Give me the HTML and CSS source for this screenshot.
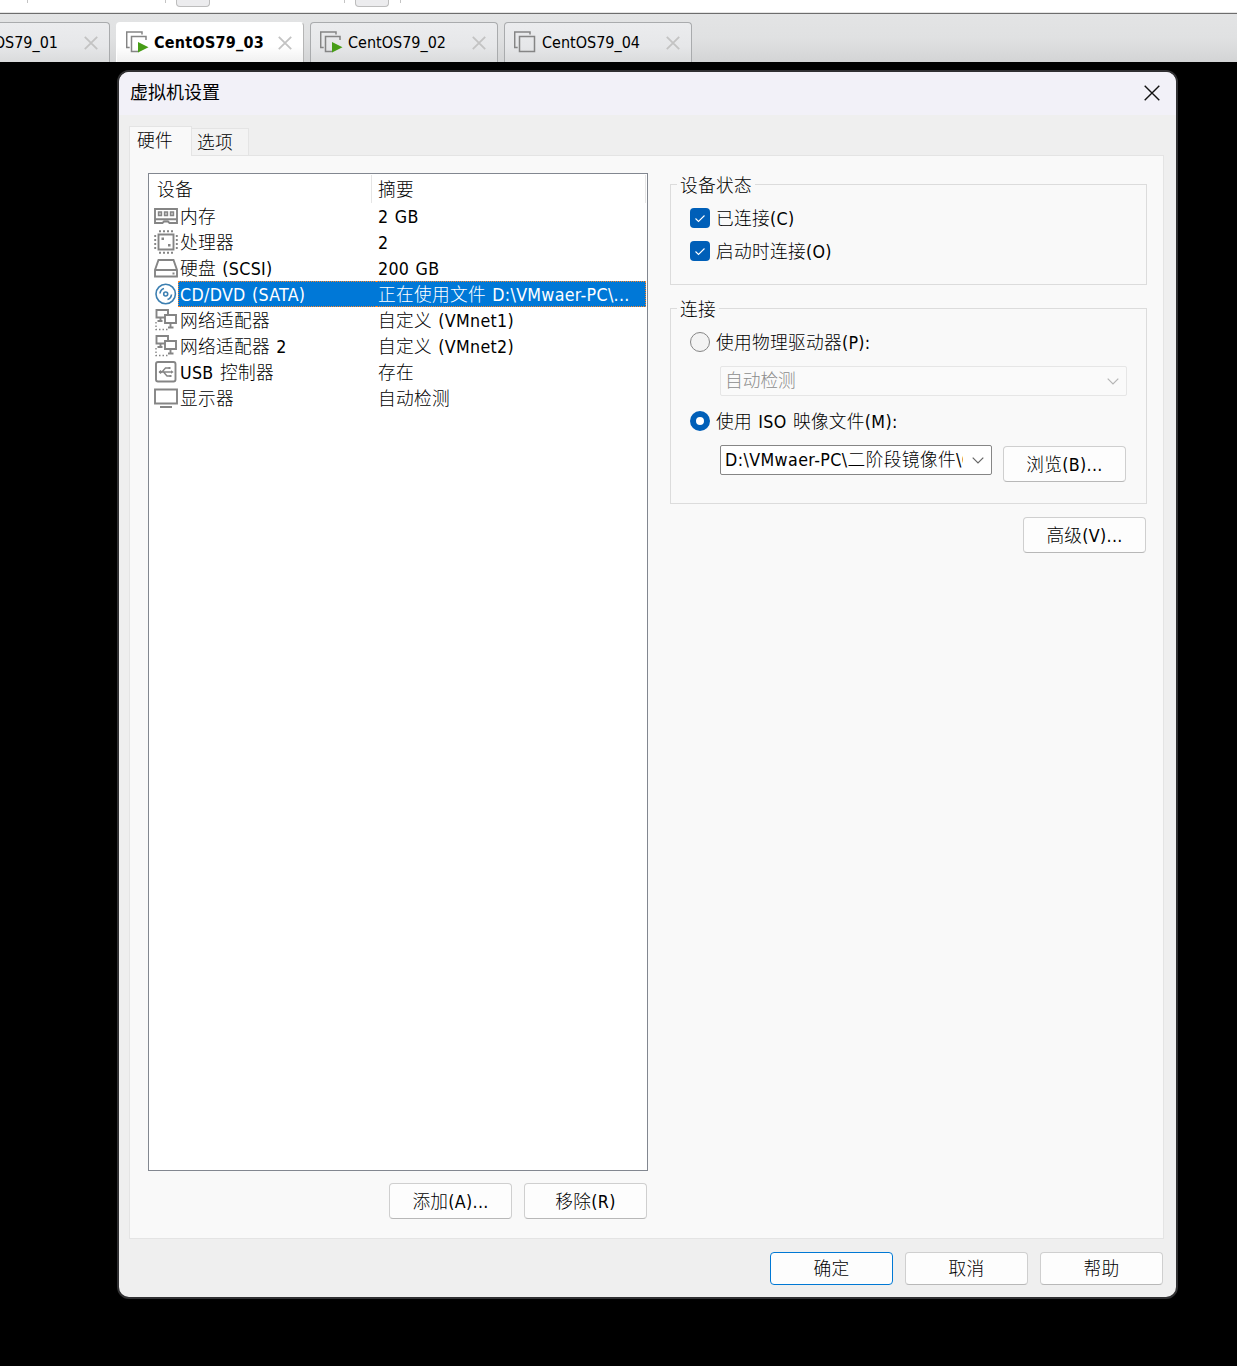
FILE: index.html
```
<!DOCTYPE html>
<html lang="zh-CN">
<head>
	<meta charset="utf-8">
	<title>虚拟机设置</title>
	<link rel="stylesheet" href="styles.css">
</head>
<body>
	<div class="toolbar">
		<i class="sep s1"></i>
		<i class="sep s2"></i>
		<i class="tool t1"></i>
		<i class="sep s3"></i>
		<i class="tool t2"></i>
		<i class="sep s4"></i>
	</div>

	<div class="vm-tabs">
		<div class="vm-tab first">
			<span class="vm-name">CentOS79_01</span>
			<svg class="close" width="14" height="14" viewBox="0 0 14 14"><path d="M.8.8l12.4 12.4M13.2.8L.8 13.2"/></svg>
		</div>
		<div class="vm-tab active">
			<svg class="vm-icon" width="23" height="23" viewBox="0 0 23 23"><path class="ln" d="M16 3.500V1H.700v15.500h3M20 9V5.500H5.500v15h7"/><path class="play" d="M12 11l10.500 5.200L12 21.500z"/></svg>
			<span class="vm-name">CentOS79_03</span>
			<svg class="close" width="14" height="14" viewBox="0 0 14 14"><path d="M.8.8l12.4 12.4M13.2.8L.8 13.2"/></svg>
		</div>
		<div class="vm-tab">
			<svg class="vm-icon" width="23" height="23" viewBox="0 0 23 23"><path class="ln" d="M16 3.500V1H.700v15.500h3M20 9V5.500H5.500v15h7"/><path class="play" d="M12 11l10.500 5.200L12 21.500z"/></svg>
			<span class="vm-name">CentOS79_02</span>
			<svg class="close" width="14" height="14" viewBox="0 0 14 14"><path d="M.8.8l12.4 12.4M13.2.8L.8 13.2"/></svg>
		</div>
		<div class="vm-tab">
			<svg class="vm-icon" width="23" height="23" viewBox="0 0 23 23"><path class="ln" d="M16 3.500V1H.700v15.500h3M5.500 5.500h15v15h-15z"/></svg>
			<span class="vm-name">CentOS79_04</span>
			<svg class="close" width="14" height="14" viewBox="0 0 14 14"><path d="M.8.8l12.4 12.4M13.2.8L.8 13.2"/></svg>
		</div>
	</div>

	<div class="dialog">
		<div class="title-bar">
			<span>虚拟机设置</span>
			<svg width="16" height="16" viewBox="0 0 16 16"><path d="M.7.7l14.600 14.600M15.300.7L.7 15.300"/></svg>
		</div>

		<div class="tabs">
			<div class="tab current">硬件</div>
			<div class="tab">选项</div>
		</div>

		<div class="panel">
			<div class="left">
				<div class="device-list">
					<div class="list-head">
						<span class="col-name">设备</span>
						<span class="col-info">摘要</span>
					</div>
					<div class="device">
						<svg class="icon" width="24" height="24" viewBox="0 0 24 24"><path d="M1 5h22v14h-7.500L14 17.500h-4L8.500 19H1zM1 15.200h22"/><path class="tint" d="M4.500 8h3v3.500h-3zM10.500 8h3v3.500h-3zM16.500 8h3v3.500h-3z"/></svg>
						<span class="name">内存</span><span class="info">2 GB</span>
					</div>
					<div class="device">
						<svg class="icon" width="24" height="24" viewBox="0 0 24 24"><path d="M4.500 4.500h15v15h-15z"/><path stroke-dasharray="2 2" d="M5 1.200h14M5 22.800h14M1.200 5v14M22.800 5v14"/><path class="fill" d="M7.500 7.500H10V10H7.500zM14 14h2.500v2.500H14z"/></svg>
						<span class="name">处理器</span><span class="info">2</span>
					</div>
					<div class="device">
						<svg class="icon" width="24" height="24" viewBox="0 0 24 24"><path d="M4.500 4h15L23 14v6.500H1V14zM1 14h22M18.500 17.500h2"/></svg>
						<span class="name">硬盘 (SCSI)</span><span class="info">200 GB</span>
					</div>
					<div class="device selected">
						<svg class="icon disc" width="24" height="24" viewBox="0 0 24 24"><circle cx="11.700" cy="12" r="9.700"/><circle cx="11.700" cy="12" r="2"/><path d="M6 11.500Q6.500 7.500 10 6.500M17.500 12.500Q17 16.500 13.500 17.500"/></svg>
						<span class="name">CD/DVD (SATA)</span><span class="info">正在使用文件 D:\VMwaer-PC\...</span>
					</div>
					<div class="device">
						<svg class="icon" width="24" height="24" viewBox="0 0 24 24"><path d="M11 9.500H2.500V2h11.500v4M6.500 9.500v3.500M3.500 13h5M11 7h11v8H11zM16.500 15v4M14 19.500h5.500"/><path class="dots" stroke-dasharray="1.500 2" d="M2 14v7.500h13"/></svg>
						<span class="name">网络适配器</span><span class="info">自定义 (VMnet1)</span>
					</div>
					<div class="device">
						<svg class="icon" width="24" height="24" viewBox="0 0 24 24"><path d="M11 9.500H2.500V2h11.500v4M6.500 9.500v3.500M3.500 13h5M11 7h11v8H11zM16.500 15v4M14 19.500h5.500"/><path class="dots" stroke-dasharray="1.500 2" d="M2 14v7.500h13"/></svg>
						<span class="name">网络适配器 2</span><span class="info">自定义 (VMnet2)</span>
					</div>
					<div class="device">
						<svg class="icon" width="24" height="24" viewBox="0 0 24 24"><rect x="2" y="2" width="19.500" height="19.500" rx="2"/><path class="thin" d="M5 12h13M8 12l3.500-4H15M9.500 12l3.500 4h3"/><path class="fill" d="M4.500 12L6.500 10l2 2-2 2zM14.500 7h2v2h-2zM15.500 15h2v2h-2zM17 10.200l2.700 1.800-2.700 1.800z"/></svg>
						<span class="name">USB 控制器</span><span class="info">存在</span>
					</div>
					<div class="device">
						<svg class="icon" width="24" height="24" viewBox="0 0 24 24"><path d="M1 3.500h22v14H1zM6 21h12"/></svg>
						<span class="name">显示器</span><span class="info">自动检测</span>
					</div>
				</div>
				<div class="list-buttons">
					<div class="btn">添加(A)...</div>
					<div class="btn">移除(R)</div>
				</div>
			</div>

			<div class="right">
				<div class="group status">
					<div class="legend"><span>设备状态</span></div>
					<div class="option">
						<svg class="check" width="20" height="20" viewBox="0 0 20 20"><path d="M5.500 10.500l3 3 6-6"/></svg>
						<span>已连接(C)</span>
					</div>
					<div class="option">
						<svg class="check" width="20" height="20" viewBox="0 0 20 20"><path d="M5.500 10.500l3 3 6-6"/></svg>
						<span>启动时连接(O)</span>
					</div>
				</div>

				<div class="group connection">
					<div class="legend"><span>连接</span></div>
					<div class="option">
						<i class="radio"></i>
						<span>使用物理驱动器(P):</span>
					</div>
					<div class="select disabled">
						<span class="value">自动检测</span>
						<svg width="12" height="7" viewBox="0 0 12 7"><path d="M.7.7L6 6 11.300.7"/></svg>
					</div>
					<div class="option iso">
						<i class="radio on"></i>
						<span>使用 ISO 映像文件(M):</span>
					</div>
					<div class="file-row">
						<div class="select">
							<span class="value">D:\VMwaer-PC\二阶段镜像件\C</span>
							<svg width="12" height="7" viewBox="0 0 12 7"><path d="M.7.7L6 6 11.300.7"/></svg>
						</div>
						<div class="btn">浏览(B)...</div>
					</div>
				</div>

				<div class="btn advanced">高级(V)...</div>
			</div>
		</div>

		<div class="footer">
			<div class="btn default">确定</div>
			<div class="btn">取消</div>
			<div class="btn">帮助</div>
		</div>
	</div>
</body>
</html>
```

FILE: styles.css
```
* {
	box-sizing: border-box;
}
body {
	margin: 0;
	height: 1366px;
	overflow: hidden;
	background: #000;
	color: #000;
	font-family: "DejaVu Sans Condensed", "Noto Sans CJK SC", sans-serif;
	font-size: 17.700px;
	font-weight: 300;
	letter-spacing: .3px;
	word-spacing: 1px;
	line-height: 26px;
	white-space: nowrap;
}
svg {
	display: block;
	flex: none;
	fill: none;
}

/* strip above the dialog */
.toolbar {
	display: flex;
	height: 14px;
	background: #fff;
	border-bottom: 1px solid #6d6d6d;
	box-shadow: inset 0 -1px #e4e4e4;
}
.sep {
	width: 1px;
	height: 3px;
	background: #c4c4c4;
}
.tool {
	width: 34px;
	height: 7px;
	background: #ececee;
	border: 1px solid #bdbdbd;
	border-top: 0;
	border-radius: 0 0 4px 4px;
}
.s1 {
	margin-left: 27px;
}
.s2 {
	margin-left: 137px;
}
.t1 {
	margin-left: 10px;
}
.s3 {
	margin-left: 134px;
}
.t2 {
	margin-left: 10px;
}
.s4 {
	margin-left: 11px;
}
.vm-tabs {
	display: flex;
	gap: 6px;
	height: 48px;
	padding-top: 8px;
	background: linear-gradient(#e3e4e5, #e0e1e2 50%, #d3d4d5);
}
.vm-tab {
	display: flex;
	align-items: center;
	flex: none;
	width: 188px;
	padding: 0 11px 0 9px;
	border: 1px solid #a9abad;
	border-bottom: 0;
	border-radius: 4px 4px 0 0;
	background: linear-gradient(#ebecee, #e6e7e9 60%, #dadbdc);
	font-size: 16px;
	font-weight: normal;
	letter-spacing: 0;
}
.vm-tab.first {
	margin-left: -78px;
	padding-left: 37px;
}
.vm-tab.active {
	background: linear-gradient(#fff 60%, #f0f0f0);
	border-color: #fff #b5b5b5 #fff #fff;
	font-weight: bold;
	letter-spacing: .25px;
}
.vm-icon {
	margin-right: 5px;
}
.vm-name {
	flex: 1;
}
.ln {
	stroke: #858585;
	stroke-width: 1.500;
}
.play {
	fill: #479d17;
}
.close {
	stroke: #c3c3c3;
	stroke-width: 1.800;
}

/* dialog window */
.dialog {
	width: 1061px;
	height: 1229px;
	margin: 8px 0 0 117px;
	border: 2px solid #303032;
	border-radius: 12px;
	background: #efefef;
	overflow: hidden;
}
.title-bar {
	display: flex;
	justify-content: space-between;
	align-items: center;
	height: 43px;
	padding: 0 16px 2px 11px;
	background: #f2f1f8;
	font-size: 18px;
	letter-spacing: 0;
	font-weight: normal;
}
.title-bar svg {
	stroke: #111;
	stroke-width: 1.400;
}
.tabs {
	display: flex;
	align-items: flex-end;
	position: relative;
	z-index: 1;
	height: 41px;
	padding-left: 10px;
}
.tab {
	width: 57px;
	height: 28px;
	padding-left: 5px;
	border: 1px solid #e4e4e4;
	border-left: 0;
	background: #f3f3f3;
	line-height: 28px;
}
.tab.current {
	width: 63px;
	height: 30px;
	padding-left: 7px;
	border: 1px solid #e4e4e4;
	border-bottom: 0;
	background: #f9f9f9;
}
.panel {
	display: flex;
	gap: 22px;
	width: 1035px;
	height: 1084px;
	margin: -1px 0 0 10px;
	padding: 17px 0 0 18px;
	border: 1px solid #e4e4e4;
	background: #f9f9f9;
}
.left {
	width: 500px;
}
.device-list {
	height: 998px;
	padding: 1px 1px;
	border: 1px solid #828790;
	background: #fff;
}
.list-head {
	display: flex;
	height: 28px;
	border-right: 1px solid #e5e5e5;
	line-height: 31px;
}
.col-name {
	width: 222px;
	padding-left: 7px;
	border-right: 1px solid #e5e5e5;
}
.col-info {
	padding-left: 6px;
}
.device {
	display: flex;
	align-items: center;
	height: 26px;
	padding-left: 4px;
}
.icon {
	stroke: #858585;
	stroke-width: 1.900;
}
.icon .fill {
	fill: #858585;
	stroke: none;
}
.icon .tint {
	fill: #c8c8c8;
	stroke-width: 1.400;
}
.icon .dots,
.icon .thin {
	stroke-width: 1.400;
}
.disc {
	stroke: #3c7fb1;
	stroke-width: 1.600;
}
.name,
.info {
	height: 26px;
	padding-left: 2px;
	line-height: 28px;
}
.name {
	width: 198px;
}
.info {
	flex: 1;
}
.selected .name,
.selected .info {
	background: #0078d7;
	color: #fff;
	border: 1px dotted #ff8728;
	line-height: 26px;
}
.selected .name {
	border-right: 0;
	padding-left: 1px;
}
.selected .info {
	border-left: 0;
}
.list-buttons {
	display: flex;
	justify-content: flex-end;
	gap: 12px;
	padding: 12px 1px 0 0;
}
.btn {
	width: 123px;
	height: 36px;
	border: 1px solid #cfcfcf;
	border-bottom-color: #b8b8b8;
	border-radius: 4px;
	background: #fdfdfd;
	line-height: 37px;
	text-align: center;
}

/* right column */
.right {
	width: 477px;
	padding-top: 11px;
}
.group {
	display: flex;
	flex-direction: column;
	border: 1px solid #dcdcdc;
	padding-left: 19px;
}
.legend {
	height: 26px;
	margin: -13px 0 0 -13px;
}
.legend span {
	display: inline-block;
	padding: 0 3px;
	background: #f9f9f9;
	line-height: 28px;
}
.status {
	height: 101px;
}
.connection {
	height: 196px;
	margin-top: 23px;
}
.option {
	display: flex;
	align-items: center;
	gap: 6px;
	height: 26px;
	margin: 7px 0 0;
}
.option span {
	padding-top: 2px;
}
.check {
	border-radius: 4px;
	background: #005fb8;
	stroke: #fff;
	stroke-width: 1.100;
}
.radio {
	width: 20px;
	height: 20px;
	border: 1px solid #868686;
	border-radius: 50%;
	background: #f3f3f3;
}
.radio.on {
	border: 6px solid #005fb8;
	background: #fff;
}
.select {
	display: flex;
	align-items: center;
	justify-content: space-between;
	width: 272px;
	height: 30px;
	margin-left: 30px;
	padding: 0 7px 0 4px;
	border: 1px solid #868686;
	border-radius: 2px;
	background: #fff;
}
.select .value {
	width: 238px;
	overflow: hidden;
	letter-spacing: .4px;
}
.select svg {
	stroke: #666;
	stroke-width: 1.200;
}
.select.disabled {
	width: 407px;
	margin-top: 11px;
	border-color: #e6e6e6;
	background: #fafafa;
	color: #8c8c8c;
}
.select.disabled .value {
	letter-spacing: 0;
	line-height: 28px;
}
.select.disabled svg {
	stroke: #b5b5b5;
}
.iso {
	margin-top: 12px;
}
.file-row {
	display: flex;
	gap: 11px;
	margin-top: 11px;
}
.file-row .btn {
	margin-top: 1px;
}
.advanced {
	margin: 13px 1px 0 auto;
}
.footer {
	display: flex;
	justify-content: flex-end;
	gap: 12px;
	padding: 13px 13px 0 0;
}
.footer .btn {
	height: 33px;
	line-height: 33px;
}
.footer .default {
	border-color: #0078d4;
}
```
